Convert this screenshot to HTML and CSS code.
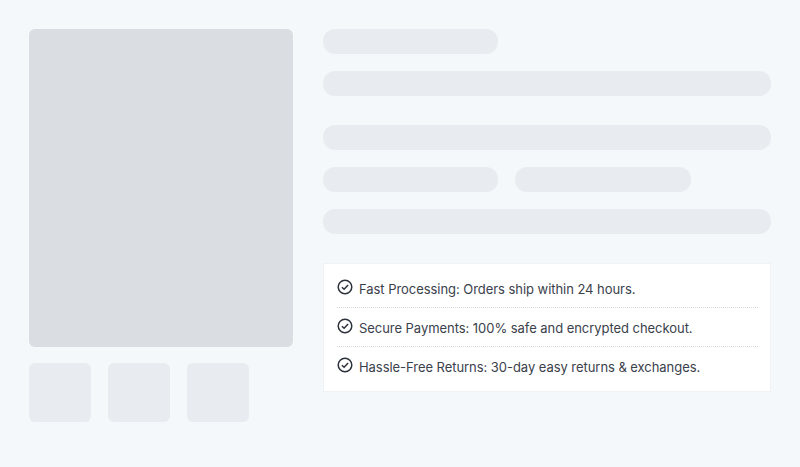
FILE: index.html
```html
<!DOCTYPE html>
<html lang="en">
<head>
    <meta charset="UTF-8">
    <meta name="viewport" content="width=device-width, initial-scale=1.0">
    <title>Product loading</title>
    <link rel="stylesheet" href="styles.css">
</head>
<body>
    <div class="product">
        <!-- Gallery placeholders -->
        <div class="gallery">
            <div class="main-image"></div>
            <div class="thumbs">
                <div class="thumb"></div>
                <div class="thumb"></div>
                <div class="thumb"></div>
            </div>
        </div>

        <!-- Product details placeholders -->
        <div class="details">
            <div class="bar bar-short"></div>
            <div class="bar bar-title"></div>
            <div class="bar bar-price"></div>
            <div class="bar-row">
                <div class="bar bar-short"></div>
                <div class="bar bar-short"></div>
            </div>
            <div class="bar"></div>

            <ul class="perks">
                <li class="perk">
                    <svg class="check" viewBox="0 0 16 16" aria-hidden="true">
                        <circle cx="8" cy="8" r="6.8"></circle>
                        <path d="M4.9 8.2 7.1 10.3 11.1 5.9"></path>
                    </svg>
                    <span>Fast Processing: Orders ship within 24 hours.</span>
                </li>
                <li class="perk">
                    <svg class="check" viewBox="0 0 16 16" aria-hidden="true">
                        <circle cx="8" cy="8" r="6.8"></circle>
                        <path d="M4.9 8.2 7.1 10.3 11.1 5.9"></path>
                    </svg>
                    <span>Secure Payments: 100% safe and encrypted checkout.</span>
                </li>
                <li class="perk">
                    <svg class="check" viewBox="0 0 16 16" aria-hidden="true">
                        <circle cx="8" cy="8" r="6.8"></circle>
                        <path d="M4.9 8.2 7.1 10.3 11.1 5.9"></path>
                    </svg>
                    <span>Hassle-Free Returns: 30-day easy returns &amp; exchanges.</span>
                </li>
            </ul>
        </div>
    </div>
</body>
</html>
```

FILE: styles.css
```css
body {
    margin: 0;
    background-color: #f4f8fb;
    color: #3a414b;
    font-family: "Inter", "Liberation Sans", sans-serif;
}

.product {
    display: flex;
    gap: 30px;
    padding: 29px 29px 0 29px;
}

/* Gallery */
.gallery {
    width: 264px;
    flex-shrink: 0;
}

.main-image {
    height: 318px;
    background-color: #dadde1;
    border-radius: 6px;
}

.thumbs {
    display: flex;
    gap: 17px;
    margin-top: 16px;
}

.thumb {
    width: 62px;
    height: 59px;
    background-color: #e8ebef;
    border-radius: 6px;
}

/* Details */
.details {
    width: 448px;
}

.bar {
    height: 24.5px;
    margin-bottom: 17.5px;
    background-color: #e8ebef;
    border-radius: 12px;
}

.bar-short {
    width: 175.25px;
}

.bar-title {
    margin-bottom: 29.5px;
}

.bar-row {
    display: flex;
    gap: 17px;
}

.perks {
    list-style: none;
    margin: 29.5px 0 0 0;
    padding: 5px 12px 6px 13px;
    background-color: #fff;
    border: 1px solid #eff3f6;
}

.perk {
    display: flex;
    align-items: center;
    gap: 6px;
    height: 38px;
    font-size: 13px;
    letter-spacing: -0.05px;
    border-bottom: 1px dotted #d5d8dc;
}

.perk:last-child {
    border-bottom: none;
}

.perk span {
    margin-top: 2px;
}

.check {
    width: 16px;
    height: 16px;
    flex-shrink: 0;
    margin-top: -2px;
    fill: none;
    stroke: #2b323b;
    stroke-width: 1.5;
}
```
